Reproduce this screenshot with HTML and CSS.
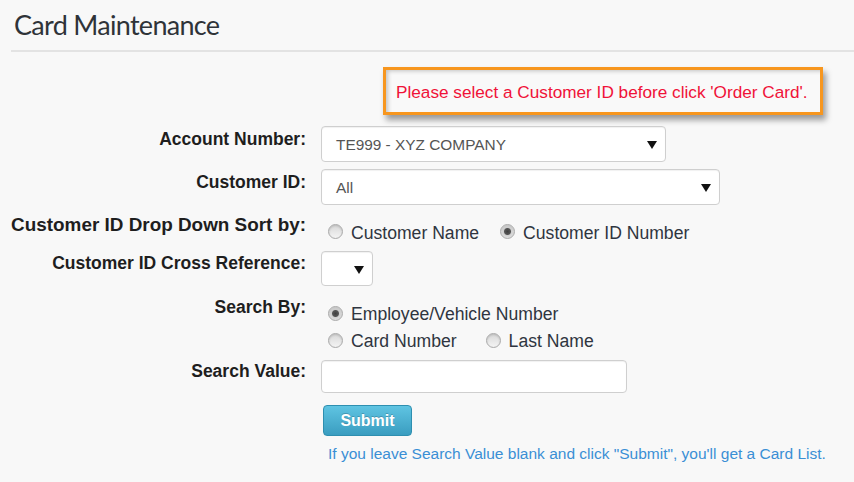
FILE: index.html
```html
<!DOCTYPE html>
<html lang="en">
<head>
<meta charset="utf-8">
<title>Card Maintenance</title>
<link rel="stylesheet" href="styles.css">
</head>
<body>
<div class="page">
  <h1 class="title">Card Maintenance</h1>

  <div class="notice-row">
    <div class="notice">Please select a Customer ID before click 'Order Card'.</div>
  </div>

  <form class="form">
    <div class="row row-account">
      <label class="lbl">Account Number:</label>
      <div class="ctl">
        <div class="select select-account"><span class="select-text">TE999 - XYZ COMPANY</span><i class="caret"></i></div>
      </div>
    </div>

    <div class="row row-customer">
      <label class="lbl">Customer ID:</label>
      <div class="ctl">
        <div class="select select-customer"><span class="select-text">All</span><i class="caret"></i></div>
      </div>
    </div>

    <div class="row row-sort">
      <label class="lbl lbl-big">Customer ID Drop Down Sort by:</label>
      <div class="ctl radios radios-sort">
        <label class="opt"><input type="radio" name="sort" class="radio"><span>Customer Name</span></label>
        <label class="opt opt-second"><input type="radio" name="sort" class="radio" checked><span>Customer ID Number</span></label>
      </div>
    </div>

    <div class="row row-xref">
      <label class="lbl">Customer ID Cross Reference:</label>
      <div class="ctl">
        <div class="select select-xref"><span class="select-text"></span><i class="caret"></i></div>
      </div>
    </div>

    <div class="row row-search">
      <label class="lbl">Search By:</label>
      <div class="ctl radios radios-search">
        <div class="radio-line">
          <label class="opt"><input type="radio" name="by" class="radio" checked><span>Employee/Vehicle Number</span></label>
        </div>
        <div class="radio-line">
          <label class="opt"><input type="radio" name="by" class="radio"><span>Card Number</span></label>
          <label class="opt opt-last"><input type="radio" name="by" class="radio"><span>Last Name</span></label>
        </div>
      </div>
    </div>

    <div class="row row-value">
      <label class="lbl">Search Value:</label>
      <div class="ctl">
        <input type="text" class="text-input">
      </div>
    </div>

    <div class="actions">
      <button type="button" class="btn">Submit</button>
      <p class="hint">If you leave Search Value blank and click "Submit", you'll get a Card List.</p>
    </div>
  </form>
</div>
</body>
</html>
```

FILE: styles.css
```css
* { box-sizing: border-box; }

html, body {
  margin: 0;
  padding: 0;
  background: #f8f8f8;
}

body {
  font-family: "Liberation Sans", Arial, sans-serif;
  color: #333;
  width: 854px;
  height: 482px;
  overflow: hidden;
}

.title {
  margin: 0 0 0 11px;
  padding: 8px 0 8px 3px;
  font-family: Lato, "Open Sans", sans-serif;
  font-weight: 400;
  font-size: 27px;
  letter-spacing: -0.7px;
  line-height: 34px;
  color: #2f3338;
  border-bottom: 2px solid #e3e3e3;
}

.notice-row {
  display: flex;
  margin-top: 15px;
}

.notice {
  margin-left: 383px;
  width: 440px;
  height: 48px;
  border: 3px solid #f7961e;
  padding: 3px 0 0 10px;
  display: flex;
  align-items: center;
  font-size: 17.2px;
  color: #f01238;
  white-space: nowrap;
  background: #f9f9f9;
  box-shadow: 3px 5px 6px rgba(0, 0, 0, 0.38), inset 4px 3px 4px -2px rgba(0, 0, 0, 0.22);
}

.form {
  margin-top: 11px;
}

.row {
  display: flex;
  align-items: flex-start;
}

.lbl {
  width: 296px;
  margin-left: 10px;
  text-align: right;
  font-weight: 700;
  font-size: 17.5px;
  line-height: 20px;
  color: #1e1e1e;
  white-space: nowrap;
  padding-top: 3px;
}

.lbl-big {
  font-size: 18.9px;
}

.ctl {
  margin-left: 15px;
}

.row-customer { margin-top: 7px; }
.row-sort { margin-top: 7px; }
.row-xref { margin-top: 8px; }
.row-xref .lbl { padding-top: 2px; }
.row-search { margin-top: 8px; }
.row-value { margin-top: 5px; }
.row-value .lbl { padding-top: 1px; }

.select {
  display: flex;
  align-items: center;
  justify-content: space-between;
  background: #fff;
  border: 1px solid #cfcfcf;
  border-radius: 4px;
  box-shadow: inset 0 1px 1px rgba(0, 0, 0, 0.06);
  padding: 2px 8px 0 14px;
  font-size: 15.4px;
  color: #555;
}

.select-account { width: 345px; height: 36px; }
.select-customer { width: 399px; height: 36px; }
.select-xref { width: 52px; height: 35px; }

.caret {
  display: block;
  width: 0;
  height: 0;
  border-left: 5px solid transparent;
  border-right: 5px solid transparent;
  border-top: 8px solid #111;
}

.radios {
  font-size: 17.6px;
  color: #2f3540;
}

.radios-sort {
  display: flex;
  padding-top: 11px;
  line-height: 20px;
}

.radios-search {
  padding-top: 7px;
}

.radio-line {
  display: flex;
  height: 27px;
  align-items: center;
}

.opt {
  display: inline-flex;
  align-items: center;
  white-space: nowrap;
}

.opt:first-child {
  margin-left: 7px;
}

.opt-second { margin-left: 21px; }
.opt-last { margin-left: 29px; }

.radio {
  -webkit-appearance: none;
  appearance: none;
  width: 15px;
  height: 15px;
  margin: -3px 8px 0 0;
  border-radius: 50%;
  border: 1px solid #a9a9a9;
  background: linear-gradient(#d8d8d8, #f4f4f4);
  box-shadow: inset 0 1px 2px rgba(0, 0, 0, 0.15);
  flex: none;
}

.radio:checked {
  background: radial-gradient(circle, #3f3f3f 0, #555 3px, #cfcfcf 4px, #e6e6e6 7px);
}

.text-input {
  display: block;
  width: 306px;
  height: 33px;
  margin: 0;
  border: 1px solid #cfcfcf;
  border-radius: 4px;
  background: #fff;
  box-shadow: inset 0 1px 1px rgba(0, 0, 0, 0.06);
}

.actions {
  margin-left: 321px;
  margin-top: 12px;
}

.btn {
  display: block;
  margin: 0 0 0 2px;
  width: 89px;
  height: 31px;
  padding: 0;
  border: 1px solid #2e8fb0;
  border-radius: 4px;
  background: linear-gradient(#5fc4e2, #3a9dc0);
  color: #fff;
  font-family: "Liberation Sans", Arial, sans-serif;
  font-weight: 700;
  font-size: 16px;
  text-shadow: 0 -1px 0 rgba(0, 0, 0, 0.2);
}

.hint {
  margin: 8px 0 0 7px;
  font-size: 15.5px;
  line-height: 20px;
  color: #3a8fd5;
  white-space: nowrap;
}
```
